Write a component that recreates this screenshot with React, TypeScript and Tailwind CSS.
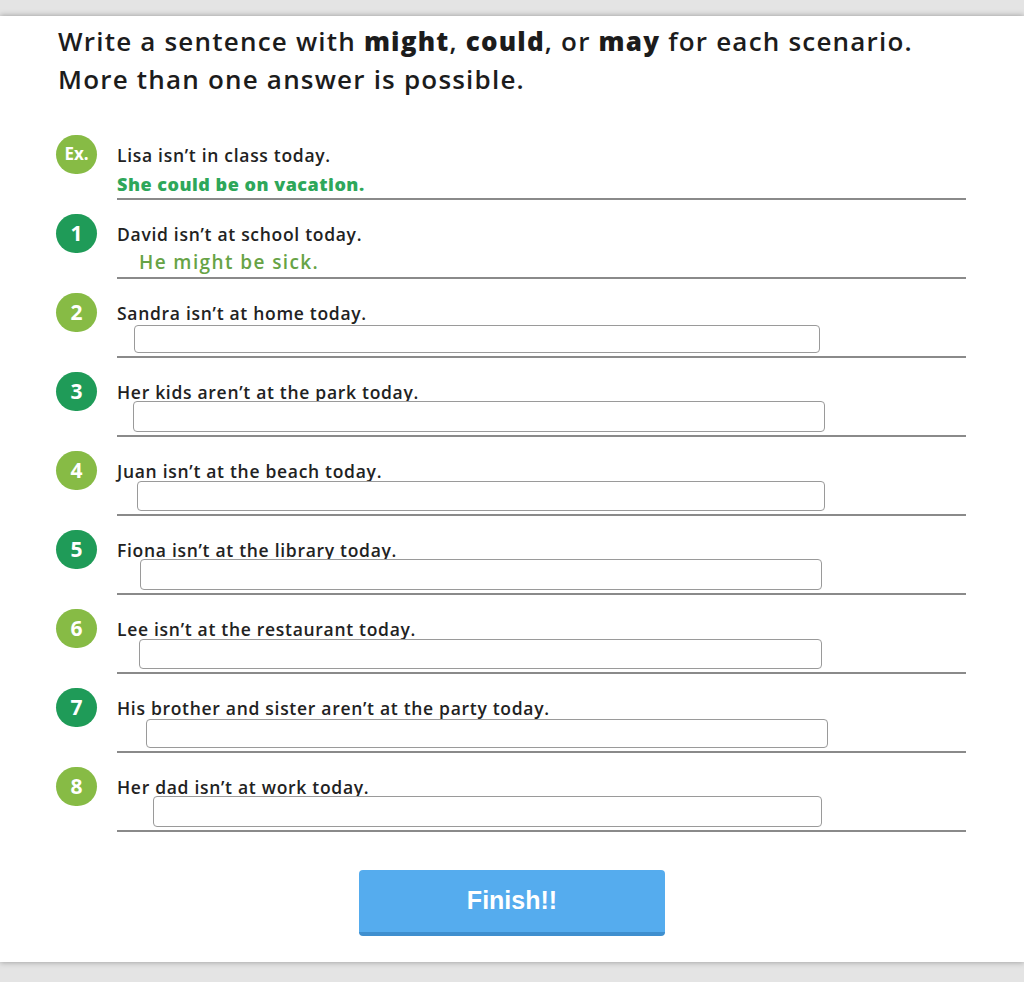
const rows: { n: string; dark: boolean; q: string; inset: number; w: number; h: number }[] = [
  { n: '2', dark: false, q: 'Sandra isn’t at home today.', inset: 17, w: 686, h: 28 },
  { n: '3', dark: true, q: 'Her kids aren’t at the park today.', inset: 16, w: 692, h: 31 },
  { n: '4', dark: false, q: 'Juan isn’t at the beach today.', inset: 20, w: 688, h: 30 },
  { n: '5', dark: true, q: 'Fiona isn’t at the library today.', inset: 23, w: 682, h: 31 },
  { n: '6', dark: false, q: 'Lee isn’t at the restaurant today.', inset: 22, w: 683, h: 30 },
  { n: '7', dark: true, q: 'His brother and sister aren’t at the party today.', inset: 29, w: 682, h: 29 },
  { n: '8', dark: false, q: 'Her dad isn’t at work today.', inset: 36, w: 669, h: 31 },
]

const Badge = ({ label, dark }: { label: string; dark: boolean }) => (
  <div
    className={`w-[41px] h-[39px] rounded-full flex items-center justify-center text-white font-bold font-['Open_Sans',sans-serif] ${
      dark ? 'bg-[#1f9b58]' : 'bg-[#87bb45]'
    } ${label.length > 1 ? 'text-[17px] pb-[1px]' : 'text-[21px]'}`}
  >
    {label}
  </div>
)

const Row = ({
  label,
  dark,
  q,
  children,
}: {
  label: string
  dark: boolean
  q: string
  children: React.ReactNode
}) => (
  <div className="flex h-[79px]">
    <div className="w-[59px] -mt-[9px]">
      <div className="-ml-[2px]">
        <Badge label={label} dark={dark} />
      </div>
    </div>
    <div className="flex flex-col w-[849px]">
      <p className="h-[22px] leading-[22px] text-[17.5px] font-semibold text-[#222] tracking-[0.7px] font-['Open_Sans',sans-serif]">
        {q}
      </p>
      <div className="h-[32px] flex items-end pb-[3px]">{children}</div>
      <div className="h-[2px] bg-[#8a8a8a]" />
    </div>
  </div>
)

export default function App() {
  return (
    <div className="h-[982px] bg-[#e4e4e4] pt-4 font-['Open_Sans',sans-serif]">
      <div className="h-[946px] bg-white shadow-[0_0_6px_rgba(0,0,0,0.35)] pl-[58px] pt-[6px]">
        <h1 className="text-[26px] leading-[38px] font-semibold text-[#1c1c1c] tracking-[1.2px]">
          Write a sentence with <b className="font-extrabold">might</b>, <b className="font-extrabold">could</b>, or{' '}
          <b className="font-extrabold">may</b> for each scenario.
          <br />
          More than one answer is possible.
        </h1>
        <div className="pt-[46px]">
          <Row label="Ex." dark={false} q="Lisa isn’t in class today.">
            <span className="text-[18px] font-extrabold text-[#2ea75a] leading-[22px] tracking-[0.5px]">
              She could be on vacation.
            </span>
          </Row>
          <Row label="1" dark q="David isn’t at school today.">
            <span className="ml-[22px] mb-[1px] text-[19px] font-semibold text-[#67a346] leading-[22px] tracking-[1.4px]">
              He might be sick.
            </span>
          </Row>
          {rows.map((r) => (
            <Row key={r.n} label={r.n} dark={r.dark} q={r.q}>
              <div
                className="border border-[#9a9a9a] rounded-[4px] bg-white"
                style={{ marginLeft: r.inset, width: r.w, height: r.h }}
              />
            </Row>
          ))}
        </div>
        <div className="pt-[15px] pl-[301px] flex">
          <button className="w-[306px] h-[66px] rounded-[4px] bg-[#55acee] border-b-[4px] border-[#3f8fcf] text-white text-[25px] font-bold font-['Liberation_Sans',sans-serif]">
            Finish!!
          </button>
        </div>
      </div>
    </div>
  )
}
